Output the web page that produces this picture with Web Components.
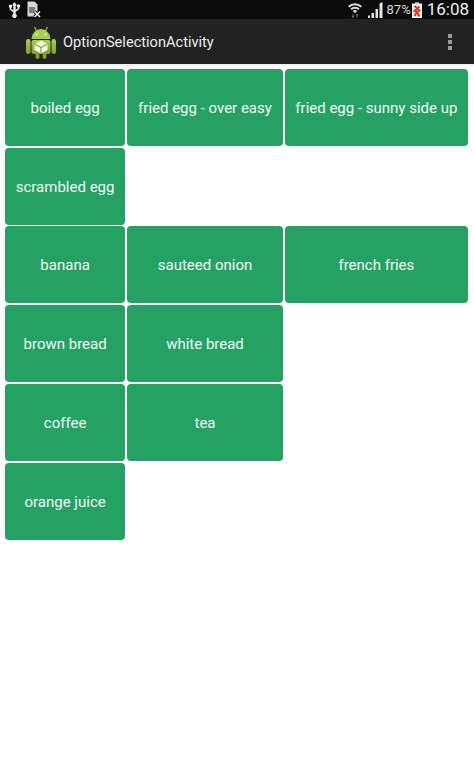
<!DOCTYPE html>
<html>
<head>
<meta charset="utf-8">
<title>OptionSelectionActivity</title>
<style>
html, body { margin: 0; padding: 0; background: #fff; font-family: Roboto, sans-serif; }
</style>
</head>
<body>
<status-bar></status-bar>
<action-bar title="OptionSelectionActivity"></action-bar>
<option-grid>
    <option-row><option-button>boiled egg</option-button><option-button>fried egg - over easy</option-button><option-button>fried egg - sunny side up</option-button></option-row>
    <option-row><option-button>scrambled egg</option-button></option-row>
    <option-row><option-button>banana</option-button><option-button>sauteed onion</option-button><option-button>french fries</option-button></option-row>
    <option-row><option-button>brown bread</option-button><option-button>white bread</option-button></option-row>
    <option-row><option-button>coffee</option-button><option-button>tea</option-button></option-row>
    <option-row><option-button>orange juice</option-button></option-row>
</option-grid>
<script>
class StatusBar extends HTMLElement {
    constructor() {
        super();
        const shadow = this.attachShadow({ mode: 'open' });
        shadow.innerHTML = `
            <style>
            :host { display: flex; align-items: center; height: 19px; background: #0b0b0b; color: #e4e4e4; font-family: Roboto, sans-serif; padding: 0 5px 0 9px; }
            svg { display: block; flex: none; }
            .left { display: flex; align-items: center; gap: 7px; }
            .right { margin-left: auto; display: flex; align-items: center; }
            .pct { font-size: 13px; margin-left: 3px; color: #d8d8d8; }
            .time { font-size: 17px; margin-left: 5px; line-height: 19px; color: #eee; }
            </style>
            <div class="left">
                <svg width="11" height="16" viewBox="0 0 11 16">
                    <path d="M5.5 0 L8 3.5 H6.7 V12 A2.2 2.2 0 1 1 4.3 12 V3.5 H3 Z" fill="#ececec"/>
                    <path d="M1.5 4.5 V7.2 L5 9.8 M9.5 4.5 V6.7 L6 9.3" fill="none" stroke="#ececec" stroke-width="1.6"/>
                    <rect x="0" y="2.8" width="3" height="2.8" fill="#ececec"/>
                    <circle cx="9.5" cy="4" r="1.7" fill="#ececec"/>
                </svg>
                <svg width="14" height="17" viewBox="0 0 14 17">
                    <path d="M0.5 0.5 H7.5 L10.5 3.5 V15.5 H0.5 Z" fill="#d6d6d6"/>
                    <rect x="2" y="6" width="6" height="6" fill="#7d7d7d"/>
                    <path d="M7.5 10.5 L13 16 M13 10.5 L7.5 16" stroke="#111" stroke-width="3.2"/>
                    <path d="M7.5 10.5 L13 16 M13 10.5 L7.5 16" stroke="#eee" stroke-width="1.5"/>
                </svg>
            </div>
            <div class="right">
                <svg width="16" height="17" viewBox="0 0 16 17">
                    <path d="M1 5 A10 10 0 0 1 15 5 L13.6 6.5 A8 8 0 0 0 2.4 6.5 Z" fill="#dcdcdc"/>
                    <path d="M3.4 7.6 A6.6 6.6 0 0 1 12.6 7.6 L11.2 9 A4.6 4.6 0 0 0 4.8 9 Z" fill="#dcdcdc"/>
                    <path d="M5.8 10 A3.2 3.2 0 0 1 10.2 10 L8 12.2 Z" fill="#dcdcdc"/>
                    <path d="M6 13 V16.5 M5 15 L6 16.5 L7 15 M10 16.5 V13 M9 14.5 L10 13 L11 14.5" fill="none" stroke="#777" stroke-width="0.9"/>
                </svg>
                <svg width="16" height="16" viewBox="0 0 16 16" style="margin-left:5px">
                    <path d="M0 13.5 H2 V16 H0 Z M3.5 11 H6 V16 H3.5 Z M7.5 7 H10 V16 H7.5 Z M11.5 1.5 L14.5 0 V16 H11.5 Z" fill="#e4e4e4"/>
                </svg>
                <span class="pct">87%</span>
                <svg width="10" height="16" viewBox="0 0 10 16" style="margin-left:1px">
                    <rect x="3" y="0" width="4" height="2" fill="#999"/>
                    <rect x="0" y="1.5" width="10" height="14.5" fill="#f2f2f2"/>
                    <path d="M2.5 4 L7.5 8.5 L5 10 L7.5 14.5 M7.5 4.5 L2.5 9 L5 10 L2.5 14" fill="none" stroke="#d8391f" stroke-width="2"/>
                </svg>
                <span class="time">16:08</span>
            </div>`;
    }
}

class ActionBar extends HTMLElement {
    constructor() {
        super();
        const title = this.getAttribute('title') || '';
        const shadow = this.attachShadow({ mode: 'open' });
        shadow.innerHTML = `
            <style>
            :host { display: flex; align-items: center; height: 45px; background: #222; color: #ececec; font-family: Roboto, sans-serif; padding: 0 22px 0 26px; border-bottom: 2px solid #f1f1f1; }
            svg { display: block; flex: none; }
            .title { font-size: 14.6px; margin-left: 7px; }
            .more { margin-left: auto; display: flex; flex-direction: column; gap: 2px; }
            .more i { display: block; width: 4px; height: 4px; background: #9a9a9a; }
            </style>
            <svg width="30" height="34" viewBox="0 0 30 34">
                <defs>
                    <linearGradient id="droid" x1="0" y1="0" x2="0" y2="1">
                        <stop offset="0" stop-color="#a9cf4f"/>
                        <stop offset="1" stop-color="#7f9f30"/>
                    </linearGradient>
                </defs>
                <path d="M8.5 2 L10.5 6 M21.5 2 L19.5 6" stroke="#a4c639" stroke-width="1.2"/>
                <path d="M5.5 14 A9.5 10 0 0 1 24.5 14 Z" fill="#a9cf4f"/>
                <circle cx="10.5" cy="9.5" r="1" fill="#eef4d8"/>
                <circle cx="19.5" cy="9.5" r="1" fill="#eef4d8"/>
                <rect x="5.5" y="15" width="19" height="14" rx="2" fill="url(#droid)"/>
                <rect x="0" y="14" width="4.5" height="15" rx="2.2" fill="url(#droid)"/>
                <rect x="25.5" y="14" width="4.5" height="15" rx="2.2" fill="url(#droid)"/>
                <rect x="9.5" y="28" width="4" height="6" rx="2" fill="#7f9f30"/>
                <rect x="16.5" y="28" width="4" height="6" rx="2" fill="#7f9f30"/>
                <path d="M15 15.5 L21.5 19 V25 L15 28.5 L8.5 25 V19 Z" fill="#f6f8ec"/>
                <path d="M8.5 19 L15 22.5 L21.5 19 M15 22.5 V28.5" fill="none" stroke="#8ba82c" stroke-width="1.2"/>
            </svg>
            <span class="title">${title}</span>
            <div class="more"><i></i><i></i><i></i></div>`;
    }
}

class OptionGrid extends HTMLElement {
    constructor() {
        super();
        const shadow = this.attachShadow({ mode: 'open' });
        shadow.innerHTML = `
            <style>
            :host { display: flex; flex-direction: column; gap: 1.75px; padding: 2.9px 6px 0 5px; }
            </style>
            <slot></slot>`;
    }
}

class OptionRow extends HTMLElement {
    constructor() {
        super();
        const shadow = this.attachShadow({ mode: 'open' });
        shadow.innerHTML = `
            <style>
            :host { display: grid; grid-template-columns: 120.2px 155.6px 183.2px; column-gap: 2px; height: 77px; }
            </style>
            <slot></slot>`;
    }
}

class OptionButton extends HTMLElement {
    constructor() {
        super();
        const shadow = this.attachShadow({ mode: 'open' });
        shadow.innerHTML = `
            <style>
            :host { display: flex; align-items: center; justify-content: center; box-sizing: border-box; padding-top: 1px; background: #25a263; color: #f2f8f4; border-radius: 4px; font-family: Roboto, sans-serif; font-size: 15px; white-space: nowrap; }
            </style>
            <slot></slot>`;
    }
}

customElements.define('status-bar', StatusBar);
customElements.define('action-bar', ActionBar);
customElements.define('option-grid', OptionGrid);
customElements.define('option-row', OptionRow);
customElements.define('option-button', OptionButton);
</script>
</body>
</html>
